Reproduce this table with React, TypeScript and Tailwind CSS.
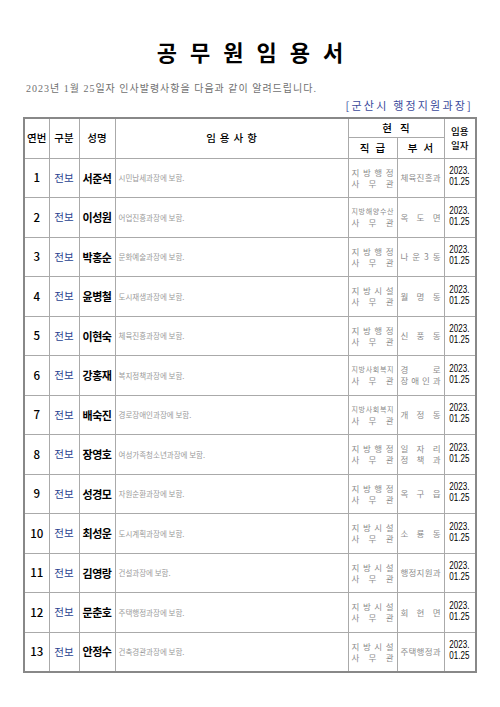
const rows = [
  { no: 1, name: "서준석", text: "시민납세과장에 보함.", rank: ["지방행정", "사무관"], dept: ["체육진흥과"] },
  { no: 2, name: "이성원", text: "어업진흥과장에 보함.", rank: ["지방해양수산", "사무관"], dept: ["옥도면"] },
  { no: 3, name: "박홍순", text: "문화예술과장에 보함.", rank: ["지방행정", "사무관"], dept: ["나운3동"] },
  { no: 4, name: "윤병철", text: "도시재생과장에 보함.", rank: ["지방시설", "사무관"], dept: ["월명동"] },
  { no: 5, name: "이현숙", text: "체육진흥과장에 보함.", rank: ["지방행정", "사무관"], dept: ["신풍동"] },
  { no: 6, name: "강홍재", text: "복지정책과장에 보함.", rank: ["지방사회복지", "사무관"], dept: ["경로", "장애인과"] },
  { no: 7, name: "배숙진", text: "경로장애인과장에 보함.", rank: ["지방사회복지", "사무관"], dept: ["개정동"] },
  { no: 8, name: "장영호", text: "여성가족청소년과장에 보함.", rank: ["지방행정", "사무관"], dept: ["일자리", "정책과"] },
  { no: 9, name: "성경모", text: "자원순환과장에 보함.", rank: ["지방행정", "사무관"], dept: ["옥구읍"] },
  { no: 10, name: "최성운", text: "도시계획과장에 보함.", rank: ["지방시설", "사무관"], dept: ["소룡동"] },
  { no: 11, name: "김영랑", text: "건설과장에 보함.", rank: ["지방시설", "사무관"], dept: ["행정지원과"] },
  { no: 12, name: "문춘호", text: "주택행정과장에 보함.", rank: ["지방시설", "사무관"], dept: ["회현면"] },
  { no: 13, name: "안정수", text: "건축경관과장에 보함.", rank: ["지방시설", "사무관"], dept: ["주택행정과"] },
];

// spreads the characters over the cell width, like 균등분할 in the original
function Spread({ text }: { text: string }) {
  const small = text.length >= 6;
  return (
    <div className={`flex justify-between leading-[11px] ${small ? "text-[7px]" : "text-[8.5px]"}`}>
      {text.split("").map((c, i) => (
        <span key={i}>{c}</span>
      ))}
    </div>
  );
}

export default function App() {
  const sans = { fontFamily: '"Noto Sans CJK KR", "Noto Sans", sans-serif' };
  return (
    <div className="w-[500px] h-[707px] bg-white text-black" style={sans}>
      <h1 className="pt-[37px] h-[65px] text-center text-[22px] font-bold leading-[28px] pl-[13px] tracking-[13px]">
        공무원임용서
      </h1>
      <p
        className="mt-[18px] pl-[26px] text-[10px] leading-[12px] tracking-[1px] text-[#707070]"
        style={{ fontFamily: '"Liberation Serif", "Noto Sans CJK KR", serif' }}
      >
        2023년 1월 25일자 인사발령사항을 다음과 같이 알려드립니다.
      </p>
      <p className="mt-[3px] pr-[27px] text-right text-[11px] leading-[14px] tracking-[2.2px] text-[#3b4a9c]">
        [군산시 행정지원과장]
      </p>
      <table className="mt-[5px] ml-[23px] w-[452px] table-fixed border-collapse border-2 border-[#888]">
        <colgroup>
          <col className="w-[25px]" />
          <col className="w-[30px]" />
          <col className="w-[36px]" />
          <col className="w-[233px]" />
          <col className="w-[49px]" />
          <col className="w-[47px]" />
          <col className="w-[32px]" />
        </colgroup>
        <thead className="text-[10.5px]">
          <tr className="h-[19px]">
            <th rowSpan={2} className="border border-[#aaa] font-medium">연번</th>
            <th rowSpan={2} className="border border-[#aaa] font-medium">구분</th>
            <th rowSpan={2} className="border border-[#aaa] font-medium">성명</th>
            <th rowSpan={2} className="border border-[#aaa] font-medium tracking-[4px] pl-[4px]">임용사항</th>
            <th colSpan={2} className="border border-[#aaa] font-medium tracking-[8px] pl-[8px]">현직</th>
            <th rowSpan={2} className="border border-[#aaa] font-medium">
              <div className="text-[9.5px] leading-[14px]">임용</div>
              <div className="text-[9.5px] leading-[14px]">일자</div>
            </th>
          </tr>
          <tr className="h-[21px]">
            <th className="border border-[#aaa] font-medium tracking-[6px] pl-[6px]">직급</th>
            <th className="border border-[#aaa] font-medium tracking-[6px] pl-[6px]">부서</th>
          </tr>
        </thead>
        <tbody>
          {rows.map((r) => (
            <tr key={r.no} className="h-[39.5px]">
              <td className="border border-[#aaa] text-center text-[11.5px] font-medium">{r.no}</td>
              <td className="border border-[#aaa] text-center text-[10.5px] text-[#27418f]">전보</td>
              <td className="border border-[#aaa] text-center text-[11px] font-bold tracking-[-0.5px]">{r.name}</td>
              <td className="border border-[#aaa] pl-[3px] text-[7.5px] text-[#9a9a9a]">{r.text}</td>
              <td className="border border-[#aaa] px-[3px] text-[#8c8c8c]">
                {r.rank.map((t) => (
                  <Spread key={t} text={t} />
                ))}
              </td>
              <td className="border border-[#aaa] px-[3px] text-[#8c8c8c]">
                {r.dept.map((t) => (
                  <Spread key={t} text={t} />
                ))}
              </td>
              <td className="border border-[#aaa] text-center">
                <div
                  className="inline-block text-[11.5px] leading-[11px] scale-x-[0.7] text-left"
                  style={{ fontFamily: '"Liberation Sans", sans-serif' }}
                >
                  2023.
                  <br />
                  01.25
                </div>
              </td>
            </tr>
          ))}
        </tbody>
      </table>
    </div>
  );
}
